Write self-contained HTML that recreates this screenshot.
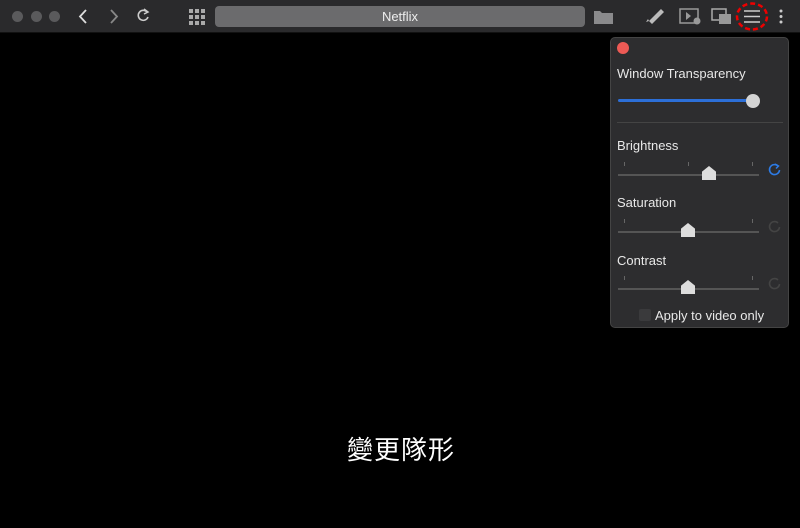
<!DOCTYPE html>
<html><head><meta charset="utf-8"><style>
*{margin:0;padding:0;box-sizing:border-box}
body{width:800px;height:528px;background:#000;overflow:hidden;position:relative;font-family:"Liberation Sans",sans-serif}
.bar{position:absolute;left:0;top:0;width:800px;height:33px;background:#2a2a2c;border-bottom:1px solid #111}
.dot{position:absolute;top:11px;width:11px;height:11px;border-radius:50%;background:#5a5a5c}
.url{position:absolute;left:215px;top:6px;width:370px;height:21px;background:#6b6b6d;border-radius:4px;color:#eee;font-size:13px;text-align:center;line-height:21px}
.panel{position:absolute;left:610px;top:37px;width:179px;height:291px;background:#2d2d2f;border:1px solid #444;border-radius:5px}
.lbl{position:absolute;left:6px;color:#e8e8e8;font-size:13px}
.track{position:absolute;left:7px;width:141px;height:2px;background:#555}
.tick{position:absolute;width:1px;height:4px;background:#666}
.thumb{position:absolute;width:14px;height:14px;background:#ddd;clip-path:polygon(50% 0,100% 40%,100% 100%,0 100%,0 40%)}
.cap{position:absolute;left:347px;top:430px;color:#fff;font-size:26px;font-family:"Liberation Sans","Noto Sans CJK TC",sans-serif;letter-spacing:1px}
</style></head><body>
<div class="bar">
<div class="dot" style="left:12px"></div><div class="dot" style="left:31px"></div><div class="dot" style="left:49px"></div>
<svg style="position:absolute;left:0;top:0" width="800" height="33">
<path d="M86 10 L80 16.5 L86 23" stroke="#ddd" stroke-width="1.8" fill="none"/>
<path d="M111 10 L117 16.5 L111 23" stroke="#888" stroke-width="1.8" fill="none"/>
<path d="M147 12 A5 5 0 1 0 148 17" stroke="#ccc" stroke-width="1.6" fill="none"/><path d="M144 9 L148 12 L144 14" stroke="#ccc" stroke-width="1.5" fill="none"/>
<g fill="#aaa"><rect x="189" y="9" width="4" height="4"/><rect x="195" y="9" width="4" height="4"/><rect x="201" y="9" width="4" height="4"/><rect x="189" y="15" width="4" height="4"/><rect x="195" y="15" width="4" height="4"/><rect x="201" y="15" width="4" height="4"/><rect x="189" y="21" width="4" height="4"/><rect x="195" y="21" width="4" height="4"/><rect x="201" y="21" width="4" height="4"/></g>
<path d="M594 11 h6 l2 2 h11 v11 h-19z" fill="#8a8a8c"/>
<path d="M661 9 L649 21 L652 24 L664 12z M648 19 l-2 3 l3 -1z" fill="#bbb"/>
<rect x="680" y="9" width="18" height="14" stroke="#999" stroke-width="1.5" fill="none"/><path d="M686 12 l5 4 l-5 4z" fill="#999"/><circle cx="697" cy="21" r="3.5" fill="#999"/>
<rect x="712" y="9" width="14" height="11" stroke="#aaa" stroke-width="1.5" fill="none"/><rect x="719" y="14" width="12" height="10" fill="#999"/>
<ellipse cx="752" cy="16.5" rx="15" ry="13" stroke="#e00" stroke-width="2.5" stroke-dasharray="5 3" fill="none"/>
<g stroke="#ccc" stroke-width="1.4"><path d="M744 11 h16 M744 16.5 h16 M744 22 h16"/></g>
<g fill="#ccc"><circle cx="781" cy="11" r="1.5"/><circle cx="781" cy="16.5" r="1.5"/><circle cx="781" cy="22" r="1.5"/></g>
</svg>
<div class="url">Netflix</div>
</div>
<div class="panel">
<div style="position:absolute;left:6px;top:4px;width:12px;height:12px;border-radius:50%;background:#ed5a55"></div>
<div class="lbl" style="top:28px">Window Transparency</div>
<div style="position:absolute;left:7px;top:61px;width:136px;height:3px;background:#2c6fd8;border-radius:2px"></div>
<div style="position:absolute;left:135px;top:56px;width:14px;height:14px;border-radius:50%;background:#d4d4d4"></div>
<div style="position:absolute;left:6px;top:84px;width:166px;height:1px;background:#444"></div>
<div class="lbl" style="top:100px">Brightness</div>
<div class="tick" style="left:13px;top:124px"></div><div class="tick" style="left:77px;top:124px"></div><div class="tick" style="left:141px;top:124px"></div>
<div class="track" style="top:136px"></div><div class="thumb" style="left:91px;top:128px"></div>
<svg style="position:absolute;left:157px;top:124px" width="14" height="14"><path d="M10 4 A5 5 0 1 0 11.5 8" stroke="#2d7be5" stroke-width="1.6" fill="none"/><path d="M7 2 L10.5 4 L8 6.5" stroke="#2d7be5" stroke-width="1.5" fill="none"/></svg>
<div class="lbl" style="top:157px">Saturation</div>
<div class="tick" style="left:13px;top:181px"></div><div class="tick" style="left:141px;top:181px"></div>
<div class="track" style="top:193px"></div><div class="thumb" style="left:70px;top:185px"></div>
<svg style="position:absolute;left:157px;top:181px" width="14" height="14"><path d="M10 4 A5 5 0 1 0 11.5 8" stroke="#444" stroke-width="1.6" fill="none"/></svg>
<div class="lbl" style="top:215px">Contrast</div>
<div class="tick" style="left:13px;top:238px"></div><div class="tick" style="left:141px;top:238px"></div>
<div class="track" style="top:250px"></div><div class="thumb" style="left:70px;top:242px"></div>
<svg style="position:absolute;left:157px;top:238px" width="14" height="14"><path d="M10 4 A5 5 0 1 0 11.5 8" stroke="#444" stroke-width="1.6" fill="none"/></svg>
<div style="position:absolute;left:28px;top:271px;width:12px;height:12px;background:#3a3a3c;border-radius:2px"></div>
<div class="lbl" style="left:44px;top:270px">Apply to video only</div>
</div>
<div class="cap">變更隊形</div>
</body></html>
